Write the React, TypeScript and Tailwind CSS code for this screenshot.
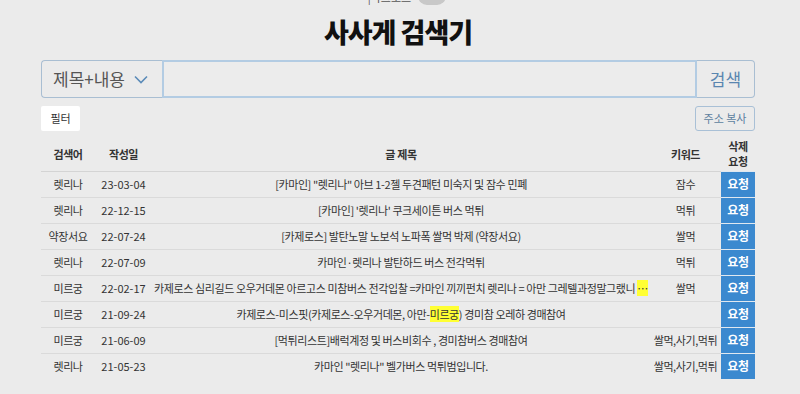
import React from "react";

type Row = { who: string; date: string; title: React.ReactNode; kw: string };

const rows: Row[] = [
  { who: "렛리나", date: "23-03-04", title: '[카마인] "렛리나" 아브 1-2젤 두견패턴 미숙지 및 잠수 민폐', kw: "잠수" },
  { who: "렛리나", date: "22-12-15", title: "[카마인] '렛리나' 쿠크세이튼 버스 먹튀", kw: "먹튀" },
  { who: "약장서요", date: "22-07-24", title: "[카제로스] 발탄노말 노보석 노파폭 쌀먹 박제 (약장서요)", kw: "쌀먹" },
  { who: "렛리나", date: "22-07-09", title: "카마인·렛리나 발탄하드 버스 전각먹튀", kw: "먹튀" },
  {
    who: "미르궁",
    date: "22-02-17",
    title: (
      <>
        카제로스 심리길드 오우거데몬 아르고스 미참버스 전각입찰 =카마인 끼끼펀치 렛리나 = 아만 그레텔과정말그랬니{" "}
        <span className="bg-[#ffff33]">…</span>
      </>
    ),
    kw: "쌀먹",
  },
  {
    who: "미르궁",
    date: "21-09-24",
    title: (
      <>
        카제로스-미스핏(카제로스-오우거데몬, 아만-<span className="bg-[#ffff33]">미르궁</span>) 경미참 오레하 경매참여
      </>
    ),
    kw: "",
  },
  { who: "미르궁", date: "21-06-09", title: "[먹튀리스트]배럭계정 및 버스비회수 , 경미참버스 경매참여", kw: "쌀먹,사기,먹튀" },
  { who: "렛리나", date: "21-05-23", title: '카마인 "렛리나" 벨가버스 먹튀범입니다.', kw: "쌀먹,사기,먹튀" },
];

const font = { fontFamily: '"Noto Sans CJK KR", "Noto Sans", sans-serif' };

export default function App() {
  return (
    <div className="min-h-screen bg-[#ebebeb] text-[#333] overflow-hidden" style={font}>
      <div className="w-[714px] ml-[41px]">
        {/* cut-off top bar */}
        <div className="h-[5px] overflow-hidden flex justify-center">
          <div className="flex items-end gap-[7px] -mt-[14px] ml-[18px]">
            <span className="text-[11px] leading-[16px] text-[#555]">|다크모드</span>
            <span className="w-[28px] h-[18px] rounded-full bg-[#c8c8c8]"></span>
          </div>
        </div>
        <h1 className="text-center text-[27px] leading-[34px] font-black tracking-[-1px] text-[#111] mt-[10px]">
          사사게 검색기
        </h1>
        {/* search */}
        <div className="flex h-[38px] mt-[11px]">
          <div className="w-[121px] flex items-center justify-between pl-[11px] pr-[14px] border border-[#a9bed2] rounded-l-[4px] border-r-0">
            <span className="text-[17px] text-[#555]">제목+내용</span>
            <svg width="14" height="9" viewBox="0 0 14 9" fill="none">
              <path d="M1 1.5 L7 7.5 L13 1.5" stroke="#5b8bb8" strokeWidth="1.6" />
            </svg>
          </div>
          <div className="flex-1 border-2 border-[#b3cce3] bg-[#ececec]"></div>
          <button className="w-[58px] border border-[#a9bed2] border-l-0 rounded-r-[4px] text-[17px] text-[#5a86b0]">
            검색
          </button>
        </div>
        {/* controls */}
        <div className="flex justify-between items-center mt-[8px]">
          <button className="h-[25px] w-[39px] bg-white text-[11px] text-[#333] rounded-[2px]">필터</button>
          <button className="h-[25px] w-[60px] border border-[#a9c0d6] rounded-[3px] text-[11px] text-[#5d7f9f]">주소 복사</button>
        </div>
        {/* table */}
        <table className="w-full table-fixed border-collapse mt-[6px] text-[11px] tracking-[-0.4px]">
          <colgroup>
            <col className="w-[54px]" />
            <col className="w-[57px]" />
            <col />
            <col className="w-[71px]" />
            <col className="w-[34px]" />
          </colgroup>
          <thead>
            <tr className="h-[34px] border-b border-[#d4d4d4]">
              <th className="font-bold">검색어</th>
              <th className="font-bold">작성일</th>
              <th className="font-bold">글 제목</th>
              <th className="font-bold">키워드</th>
              <th className="font-bold leading-[15px]">
                삭제
                <br />
                요청
              </th>
            </tr>
          </thead>
          <tbody>
            {rows.map((r, i) => (
              <tr key={i} className="h-[26px] border-t border-[#dadada] first:border-t-0">
                <td className="text-center whitespace-nowrap">{r.who}</td>
                <td className="text-center whitespace-nowrap tracking-normal">{r.date}</td>
                <td className="text-center whitespace-nowrap overflow-hidden">{r.title}</td>
                <td className="text-center whitespace-nowrap">{r.kw}</td>
                <td className="bg-[#3b89cf] text-white font-bold text-[12px] text-center border-t border-[#e0e8f0]">요청</td>
              </tr>
            ))}
          </tbody>
        </table>
      </div>
    </div>
  );
}
